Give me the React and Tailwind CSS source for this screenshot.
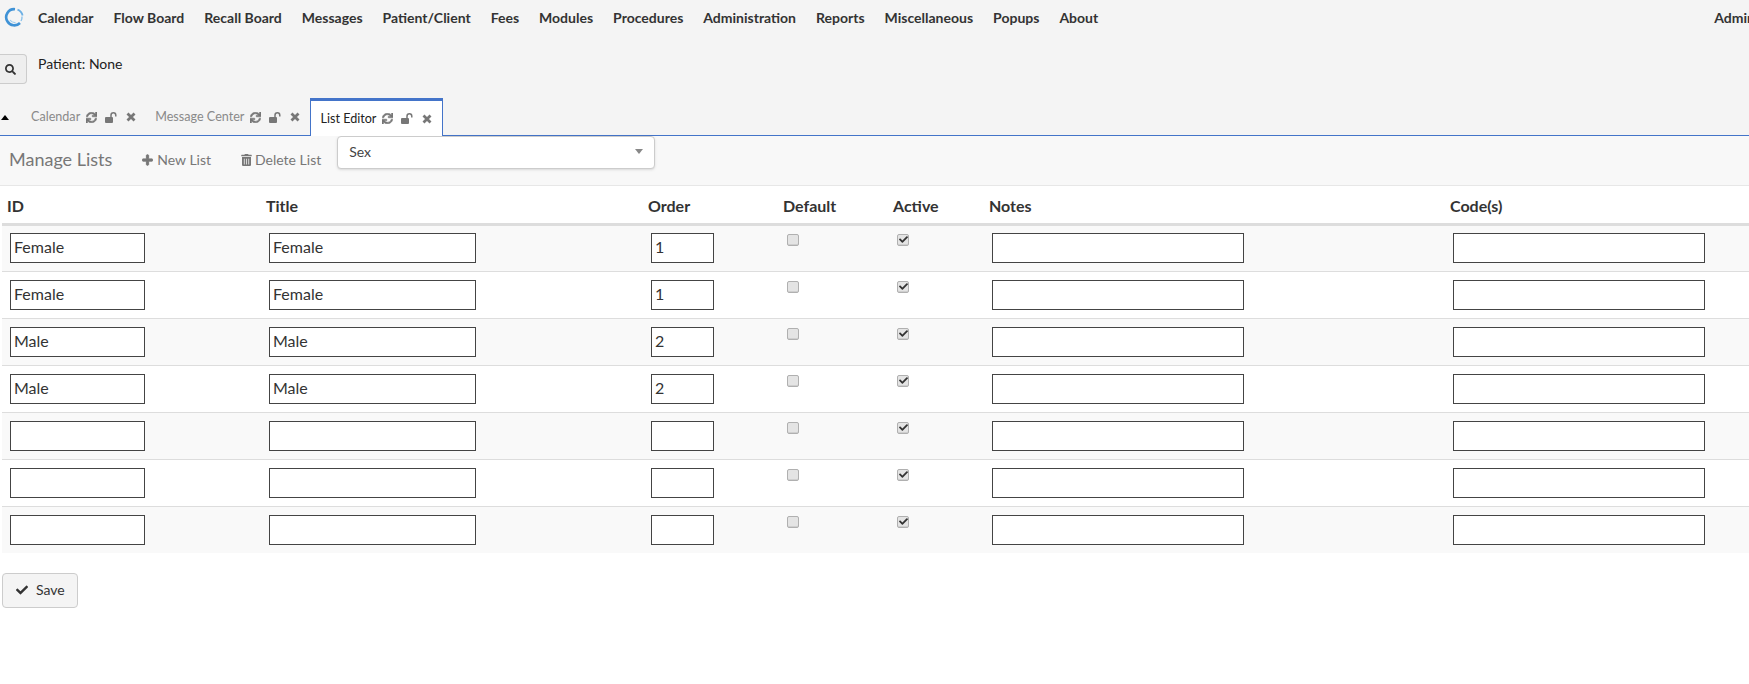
import React from "react";
import { FaSync, FaPlus, FaTrashAlt, FaCheck, FaSearch } from "react-icons/fa";

const nav = ["Calendar","Flow Board","Recall Board","Messages","Patient/Client","Fees","Modules","Procedures","Administration","Reports","Miscellaneous","Popups","About"];
const rows = [["Female","Female","1"],["Female","Female","1"],["Male","Male","2"],["Male","Male","2"],["","",""],["","",""],["","",""]];

function Tab({ label, active }) {
  return (
    <div className={active
      ? "relative -mb-px flex h-[38px] w-[133px] items-center border-x border-t-[3px] border-[#4374c9] bg-white pl-[9px] text-[#222]"
      : "flex h-[38px] items-center pl-[9px] pr-[10px] text-[#8a8a8a]"}>
      <span className="pt-px text-[12.6px]">{label}</span>
      <span className="ml-[6px] flex items-center gap-[8px] text-[#777]">
        <FaSync className="h-[11px] w-[11px] [stroke-width:25]" />
        <svg viewBox="0 0 12 11" className="h-[11px] w-[12px]">
          <rect x="0" y="5" width="8" height="6" rx="1" fill="currentColor" />
          <path d="M6 5.5 V3.2 A2.4 2.4 0 0 1 10.8 3.2 V4.6" fill="none" stroke="currentColor" strokeWidth="1.5" />
        </svg>
        <svg viewBox="0 0 10 10" className="ml-px h-[10px] w-[10px]">
          <path d="M1.5 1.5 L8.5 8.5 M8.5 1.5 L1.5 8.5" fill="none" stroke="currentColor" strokeWidth="2.8" />
        </svg>
      </span>
    </div>
  );
}

function Box({ checked }) {
  return (
    <span className="mt-[1px] ml-[9px] flex h-[12px] w-[12px] items-center justify-center rounded-[2px] border border-[#b0b0b0] bg-[#e4e4e4] shadow-[inset_0_-1px_0_#cfcfcf]">
      {checked && <FaCheck className="h-[9px] w-[9px] text-[#333]" />}
    </span>
  );
}

const inputCls = "block h-[30px] border border-[#444] bg-white px-[3px] pb-[2px] text-[16px] text-[#333] outline-none";

export default function App() {
  return (
    <div className="h-[684px] w-[1749px] overflow-hidden bg-white font-['Lato',sans-serif] text-[14px] text-[#333]">
      <div className="h-[136px] border-b border-[#4374c9] bg-[#f4f4f4]">
        <div className="flex h-[34px] items-center">
          <svg viewBox="0 0 20 20" className="ml-[4px] h-[20px] w-[20px] shrink-0">
            <path d="M11 2.2 A8 8 0 0 0 3.5 14.5 A8 8 0 0 0 16 16" fill="none" stroke="#3f92d6" strokeWidth="2.6" />
            <path d="M13.5 2.6 A8.4 8.4 0 0 1 18.6 8.5" fill="none" stroke="#6db0e4" strokeWidth="1.8" />
            <path d="M18 9.5 A8 8 0 0 1 17 14" fill="none" stroke="#8cc2ea" strokeWidth="1.4" />
            <path d="M6 13 A6 6 0 0 0 11.5 15.5" fill="none" stroke="#9ccbee" strokeWidth="1.2" />
          </svg>
          <nav className="ml-[14px] flex items-center gap-[20px] whitespace-nowrap font-bold text-[#333]">
            {nav.map((n) => <span key={n}>{n}</span>)}
            <span className="ml-[596px]">Admin</span>
          </nav>
        </div>
        <div className="mt-[20px] flex items-start">
          <button className="flex h-[30px] w-[27px] items-center justify-center rounded-r-[4px] border border-l-0 border-[#ccc] bg-[#eee] pr-[5px] text-[#333]">
            <FaSearch className="h-[11px] w-[11px]" />
          </button>
          <span className="ml-[11px] -mt-px font-normal text-[#222]">Patient: None</span>
        </div>
        <div className="mt-[14px] flex items-start">
          <svg viewBox="0 0 8 5" className="ml-[1px] mt-[17px] h-[5px] w-[8px]"><path d="M4 0 L8 5 L0 5 Z" fill="#000" /></svg>
          <div className="ml-[13px] flex">
            <Tab label="Calendar" />
            <Tab label="Message Center" />
            <Tab label="List Editor" active />
          </div>
        </div>
      </div>

      <div className="flex h-[50px] items-start border-b border-[#e7e7e7] bg-[#f8f8f8]">
        <span className="ml-[9px] mt-[10px] text-[18px] text-[#777]">Manage Lists</span>
        <span className="ml-[30px] mt-[13px] flex items-center gap-[4px] text-[#777]"><FaPlus className="h-[12px] w-[11px] [stroke-width:40]" />New List</span>
        <span className="ml-[30px] mt-[13px] flex items-center gap-[3px] text-[#777]"><FaTrashAlt className="h-[12px] w-[11px]" />Delete List</span>
        <div className="ml-[16px] flex h-[33px] w-[318px] items-center justify-between rounded-[4px] border border-[#ccc] bg-white px-[11px] pb-[3px] shadow-sm">
          <span className="text-[#444]">Sex</span>
          <span className="h-0 w-0 border-x-[4px] border-t-[5px] border-x-transparent border-t-[#888]" />
        </div>
      </div>

      <table className="ml-[2px] w-[1747px] table-fixed border-collapse">
        <colgroup>
          <col className="w-[259px]" /><col className="w-[382px]" /><col className="w-[135px]" /><col className="w-[110px]" /><col className="w-[96px]" /><col className="w-[461px]" /><col />
        </colgroup>
        <thead>
          <tr className="h-[38px] border-b-[3px] border-[#ddd] text-left text-[16px] font-bold text-[#333]">
            {["ID","Title","Order","Default","Active","Notes","Code(s)"].map((h) => <th key={h} className="pl-[5px] pt-[3px] font-bold">{h}</th>)}
          </tr>
        </thead>
        <tbody>
          {rows.map((r, i) => {
            const pt = i === 0 ? " pt-[7px]" : " pt-[8px]";
            return (
              <tr key={i} className={(i % 2 === 0 ? "bg-[#f9f9f9]" : "bg-white") + " h-[47px] border-t border-[#ddd] align-top first:border-t-0"}>
                <td className={"pl-[8px]" + pt}><input readOnly value={r[0]} className={inputCls + " w-[135px]"} /></td>
                <td className={"pl-[8px]" + pt}><input readOnly value={r[1]} className={inputCls + " w-[207px]"} /></td>
                <td className={"pl-[8px]" + pt}><input readOnly value={r[2]} className={inputCls + " w-[63px]"} /></td>
                <td className={pt}><Box /></td>
                <td className={pt}><Box checked /></td>
                <td className={"pl-[8px]" + pt}><input readOnly className={inputCls + " w-[252px]"} /></td>
                <td className={"pl-[8px]" + pt}><input readOnly className={inputCls + " w-[252px]"} /></td>
              </tr>
            );
          })}
        </tbody>
      </table>

      <button className="ml-[2px] mt-[20px] flex h-[35px] w-[76px] items-center rounded-[4px] border border-[#ccc] bg-[#f4f4f4] pb-[2px] pl-[13px] text-[#333]">
        <FaCheck className="mr-[8px] h-[12px] w-[12px]" />Save
      </button>
    </div>
  );
}
